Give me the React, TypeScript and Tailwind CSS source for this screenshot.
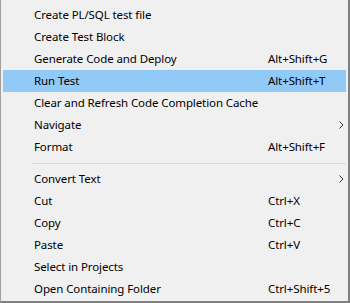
import React from "react";

type Item = { label: string; shortcut?: string; sub?: boolean; active?: boolean } | "sep";

const items: Item[] = [
  { label: "Create PL/SQL test file" },
  { label: "Create Test Block" },
  { label: "Generate Code and Deploy", shortcut: "Alt+Shift+G" },
  { label: "Run Test", shortcut: "Alt+Shift+T", active: true },
  { label: "Clear and Refresh Code Completion Cache" },
  { label: "Navigate", sub: true },
  { label: "Format", shortcut: "Alt+Shift+F" },
  "sep",
  { label: "Convert Text", sub: true },
  { label: "Cut", shortcut: "Ctrl+X" },
  { label: "Copy", shortcut: "Ctrl+C" },
  { label: "Paste", shortcut: "Ctrl+V" },
  { label: "Select in Projects" },
  { label: "Open Containing Folder", shortcut: "Ctrl+Shift+5" },
];

function Chevron() {
  return (
    <svg width="5" height="8" viewBox="0 0 5 8" className="block">
      <path d="M0.5 0.5 L4 4 L0.5 7.5" fill="none" stroke="#333" strokeWidth="1" />
    </svg>
  );
}

export default function App() {
  return (
    <div
      className="w-[350px] h-[303px] bg-[#f0f0f0] border-l border-l-[#a0a0a0] border-r-2 border-r-[#808080] border-b-2 border-b-[#808080] pt-[4px] pl-[2px] pr-[2px] text-[11.5px] tracking-[-0.1px] text-black"
      style={{ fontFamily: '"Segoe UI", "Noto Sans", sans-serif' }}
    >
      {items.map((it, i) =>
        it === "sep" ? (
          <div key={i} className="h-[10px] flex items-center pl-[29px]">
            <div className="h-px w-full bg-[#d7d7d7]" />
          </div>
        ) : (
          <div
            key={i}
            className={`h-[22px] flex items-center relative ${it.active ? "bg-[#91c9f7]" : ""}`}
          >
            <span className="pl-[31px] w-[265px] whitespace-nowrap leading-none">{it.label}</span>
            {it.shortcut && <span className="whitespace-nowrap leading-none">{it.shortcut}</span>}
            {it.sub && (
              <span className="absolute right-[2px] top-[7px]">
                <Chevron />
              </span>
            )}
          </div>
        )
      )}
    </div>
  );
}
